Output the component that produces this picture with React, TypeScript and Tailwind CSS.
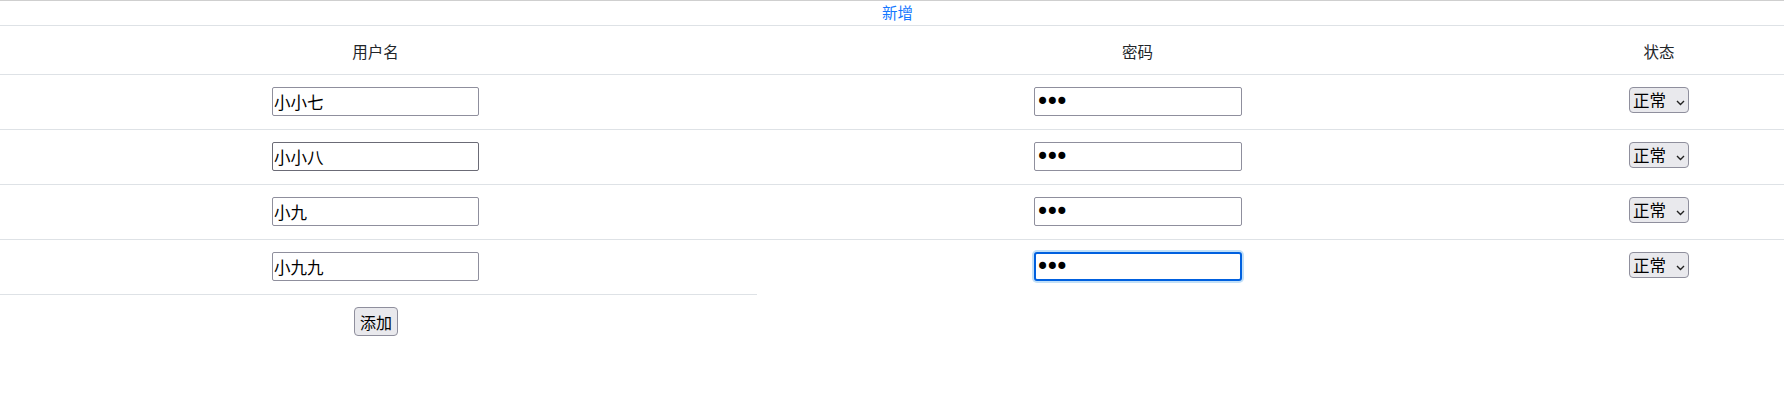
import React from "react";

const users = [
  { name: "小小七", pwd: "123" },
  { name: "小小八", pwd: "123" },
  { name: "小九", pwd: "123" },
  { name: "小九九", pwd: "123" },
];

const c1 = "w-[757px] flex justify-center pr-[6px]";
const c2 = "w-[761px] flex justify-center";
const c3 = "flex-1 flex justify-center pl-[16px]";

function StatusSelect() {
  return (
    <div className="relative">
      <select
        defaultValue="1"
        className="appearance-none w-[60px] h-[26px] border border-[#8f8f9d] rounded-[4px] bg-[#e9e9ed] pl-[3px] text-[16.5px] leading-none text-black outline-none"
      >
        <option value="1">正常</option>
        <option value="0">禁用</option>
      </select>
      <svg
        className="pointer-events-none absolute right-[4px] top-[13px]"
        width="9"
        height="6"
        viewBox="0 0 9 6"
        fill="none"
      >
        <path d="M1 1l3.5 3.5L8 1" stroke="#222" strokeWidth="1.4" />
      </svg>
    </div>
  );
}

export default function App() {
  return (
    <div className="font-['Noto_Sans_CJK_SC',sans-serif] text-[#212529] w-[1784px]">
      {/* 新增 */}
      <div className="border-t border-[#cfcfcf] h-[25px] flex items-center justify-center pl-[11px] text-[15.5px] text-[#1677ff]">
        新增
      </div>

      {/* header */}
      <div className="flex h-[49px] border-t border-[#dee2e6] items-center pt-[3px] text-[15.5px]">
        <div className={c1}>用户名</div>
        <div className={c2}>密码</div>
        <div className={c3}>状态</div>
      </div>

      {/* rows */}
      {users.map((u, i) => (
        <div
          key={i}
          className="flex h-[55px] border-t border-[#dee2e6] items-start pt-[12px]"
        >
          <div className={c1}>
            <input
              type="text"
              defaultValue={u.name}
              className={
                "w-[207px] h-[29px] border rounded-[2px] bg-white pl-[1px] text-[16.5px] text-black outline-none " +
                (i === 1 ? "border-[#6b6b76]" : "border-[#8f8f9d]")
              }
            />
          </div>
          <div className={c2}>
            {i === 3 ? (
              <input
                type="password"
                defaultValue={u.pwd}
                className="w-[208px] h-[29px] border-2 border-[#0060df] rounded-[3px] bg-white pl-[0px] font-['DejaVu_Sans',sans-serif] text-[24px] tracking-[-4.5px] text-black outline-none shadow-[0_0_0_2px_#c2e0f8]"
              />
            ) : (
              <input
                type="password"
                defaultValue={u.pwd}
                className="w-[208px] h-[29px] border border-[#8f8f9d] rounded-[2px] bg-white pl-[1px] font-['DejaVu_Sans',sans-serif] text-[24px] tracking-[-4.5px] text-black outline-none"
              />
            )}
          </div>
          <div className={c3}>
            <StatusSelect />
          </div>
        </div>
      ))}

      {/* footer */}
      <div className="w-[757px] border-t border-[#dee2e6] pt-[12px] flex justify-center pr-[5px]">
        <button className="h-[29px] px-[5px] border border-[#8f8f9d] rounded-[4px] bg-[#e9e9ed] text-[16px] text-black leading-none">
          添加
        </button>
      </div>
    </div>
  );
}
